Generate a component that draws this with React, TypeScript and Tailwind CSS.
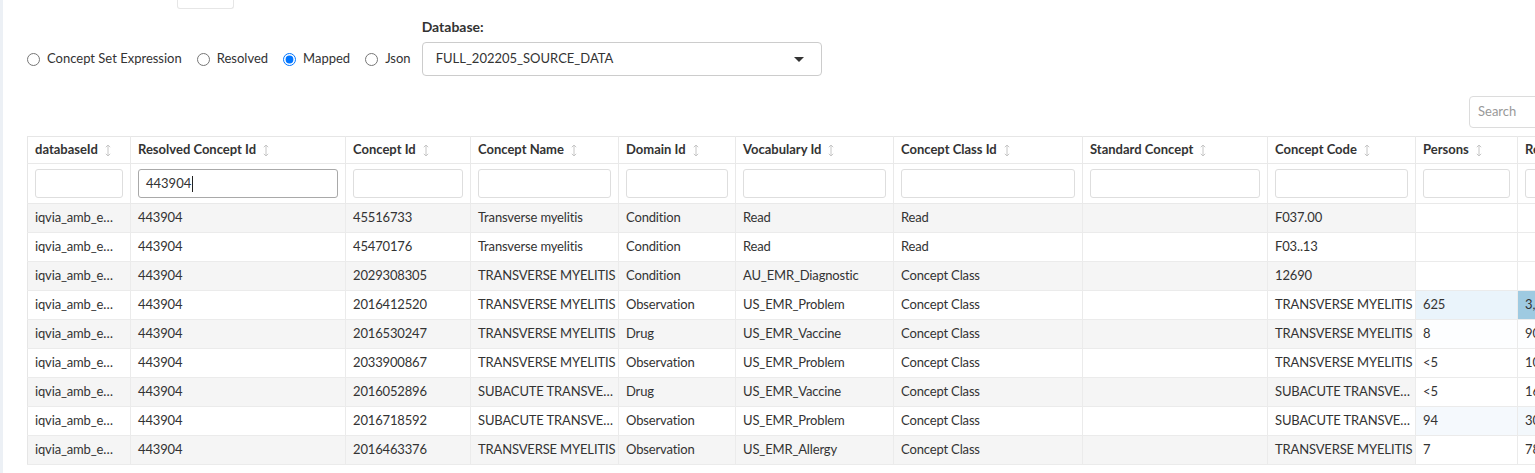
import React from "react"

type Row = {
  resolved: string
  conceptId: string
  name: string
  domain: string
  vocab: string
  conceptClass: string
  code: string
  persons: string
  records: string
  personsBg?: string
  recordsBg?: string
}

const columns = [
  { title: "databaseId", width: "w-[103px]" },
  { title: "Resolved Concept Id", width: "w-[215px]" },
  { title: "Concept Id", width: "w-[125px]" },
  { title: "Concept Name", width: "w-[148px]" },
  { title: "Domain Id", width: "w-[117px]" },
  { title: "Vocabulary Id", width: "w-[158px]" },
  { title: "Concept Class Id", width: "w-[189px]" },
  { title: "Standard Concept", width: "w-[185px]" },
  { title: "Concept Code", width: "w-[148px]" },
  { title: "Persons", width: "w-[102px]" },
  { title: "Records", width: "w-[130px]" },
]

const rows: Row[] = [
  { resolved: "443904", conceptId: "45516733", name: "Transverse myelitis", domain: "Condition", vocab: "Read", conceptClass: "Read", code: "F037.00", persons: "", records: "" },
  { resolved: "443904", conceptId: "45470176", name: "Transverse myelitis", domain: "Condition", vocab: "Read", conceptClass: "Read", code: "F03..13", persons: "", records: "" },
  { resolved: "443904", conceptId: "2029308305", name: "TRANSVERSE MYELITIS", domain: "Condition", vocab: "AU_EMR_Diagnostic", conceptClass: "Concept Class", code: "12690", persons: "", records: "" },
  { resolved: "443904", conceptId: "2016412520", name: "TRANSVERSE MYELITIS", domain: "Observation", vocab: "US_EMR_Problem", conceptClass: "Concept Class", code: "TRANSVERSE MYELITIS", persons: "625", records: "3,418", personsBg: "bg-[#eaf4fb]", recordsBg: "bg-[#9ecae1]" },
  { resolved: "443904", conceptId: "2016530247", name: "TRANSVERSE MYELITIS", domain: "Drug", vocab: "US_EMR_Vaccine", conceptClass: "Concept Class", code: "TRANSVERSE MYELITIS", persons: "8", records: "90", personsBg: "bg-[#fdfeff]", recordsBg: "bg-[#fdfeff]" },
  { resolved: "443904", conceptId: "2033900867", name: "TRANSVERSE MYELITIS", domain: "Observation", vocab: "US_EMR_Problem", conceptClass: "Concept Class", code: "TRANSVERSE MYELITIS", persons: "<5", records: "10" },
  { resolved: "443904", conceptId: "2016052896", name: "SUBACUTE TRANSVERSE MYELITIS", domain: "Drug", vocab: "US_EMR_Vaccine", conceptClass: "Concept Class", code: "SUBACUTE TRANSVERSE MYELITIS", persons: "<5", records: "16" },
  { resolved: "443904", conceptId: "2016718592", name: "SUBACUTE TRANSVERSE MYELITIS", domain: "Observation", vocab: "US_EMR_Problem", conceptClass: "Concept Class", code: "SUBACUTE TRANSVERSE MYELITIS", persons: "94", records: "303", personsBg: "bg-[#f5f9fd]", recordsBg: "bg-[#f3f8fc]" },
  { resolved: "443904", conceptId: "2016463376", name: "TRANSVERSE MYELITIS", domain: "Observation", vocab: "US_EMR_Allergy", conceptClass: "Concept Class", code: "TRANSVERSE MYELITIS", persons: "7", records: "78" },
]

function SortIcon() {
  return (
    <svg width="8" height="15" viewBox="0 0 8 15" fill="none" stroke="#c6c6c6" strokeWidth="1" className="ml-[6px] shrink-0">
      <path d="M4 2v11M1.8 4.2L4 2l2.2 2.2M1.8 10.8L4 13l2.2-2.2" />
    </svg>
  )
}

function Radio({ label, checked = false }: { label: string; checked?: boolean }) {
  return (
    <label className="flex items-center">
      <input type="radio" name="view" defaultChecked={checked} className="m-0 h-[13px] w-[13px]" />
      <span className="ml-[7px] text-[#333]">{label}</span>
    </label>
  )
}

const cellBase = "truncate border-r border-b border-[#ebebeb] pl-[7px] tracking-[-0.15px]"

export default function App() {
  return (
    <div
      className="h-[473px] w-full overflow-hidden border-l-[3px] border-[#ecf0f5] bg-white text-[13px] text-[#333]"
      style={{ fontFamily: "Lato, 'Liberation Sans', sans-serif" }}
    >
      <div className="w-[1680px]">
        <div className="ml-[174px] h-[9px] w-[57px] rounded-b-[3px] border border-t-0 border-[#e6e6e6]" />

        <div className="ml-[24px] mt-[8px] flex items-end">
          <div className="flex h-[34px] items-center gap-[15px]">
            <Radio label="Concept Set Expression" />
            <Radio label="Resolved" />
            <Radio label="Mapped" checked />
            <Radio label="Json" />
          </div>
          <div className="ml-[11px]">
            <div className="mb-[5px] text-[14px] leading-[20px] font-bold text-[#333]">Database:</div>
            <div className="flex h-[34px] w-[400px] items-center justify-between rounded-[4px] border border-[#cccccc] pl-[13px] pr-[17px]">
              <span>FULL_202205_SOURCE_DATA</span>
              <span className="h-0 w-0 border-x-[5px] border-t-[5px] border-x-transparent border-t-[#333]" />
            </div>
          </div>
        </div>

        <div className="mt-[20px] flex w-[1640px] justify-end">
          <div className="flex h-[32px] w-[174px] items-center rounded-[4px] border border-[#dcdcdc] pl-[8px] text-[#999]">
            Search
          </div>
        </div>

        <table className="ml-[24px] mt-[8px] w-[1620px] table-fixed border-collapse border border-[#e6e6e6]">
          <colgroup>
            {columns.map((c) => (
              <col key={c.title} className={c.width} />
            ))}
          </colgroup>
          <thead>
            <tr className="h-[27px]">
              {columns.map((c) => (
                <th key={c.title} className="border-r border-b border-[#e9e9e9] px-[7px] text-left font-bold">
                  <div className="flex items-center whitespace-nowrap">
                    {c.title}
                    <SortIcon />
                  </div>
                </th>
              ))}
            </tr>
            <tr className="h-[39px]">
              {columns.map((c, i) => (
                <td key={c.title} className="border-r border-b border-[#e9e9e9] px-[7px] py-[5px]">
                  {i === 1 ? (
                    <div className="flex h-[29px] items-center rounded-[3px] border border-[#a9a9a9] pl-[7px]">
                      443904
                      <span className="ml-px h-[16px] w-px bg-[#222]" />
                    </div>
                  ) : (
                    <div className="h-[29px] rounded-[3px] border border-[#dedede]" />
                  )}
                </td>
              ))}
            </tr>
          </thead>
          <tbody>
            {rows.map((r, i) => {
              const stripe = i % 2 === 0 ? "bg-[#f5f5f5]" : "bg-white"
              const cells = [r.resolved, r.conceptId, r.name, r.domain, r.vocab, r.conceptClass, "", r.code]
              return (
                <tr key={r.conceptId} className="h-[29px]">
                  <td className={`${stripe} ${cellBase} pr-[12px]`}>iqvia_amb_emr</td>
                  {cells.map((v, j) => (
                    <td key={j} className={`${stripe} ${cellBase} pr-px`}>
                      {v}
                    </td>
                  ))}
                  <td className={`${r.personsBg ?? "bg-white"} ${cellBase} pr-px`}>{r.persons}</td>
                  <td className={`${r.recordsBg ?? "bg-white"} ${cellBase} pr-px`}>{r.records}</td>
                </tr>
              )
            })}
          </tbody>
        </table>

        <div className="ml-[174px] mt-[8px] h-[10px] w-[56px] rounded-t-[3px] border border-b-0 border-[#e6e6e6]" />
      </div>
    </div>
  )
}
